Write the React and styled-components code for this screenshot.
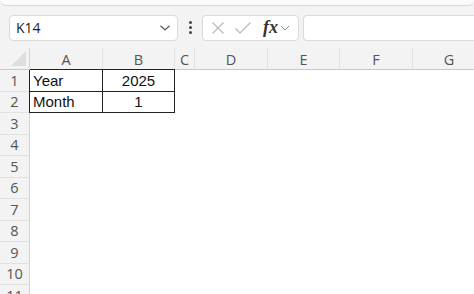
import React from "react";
import styled, { createGlobalStyle } from "styled-components";

const Global = createGlobalStyle`
  html, body { margin: 0; padding: 0; background: #f3f3f3; overflow: hidden; }
  body { width: 474px; height: 294px; font-family: "Open Sans", "Liberation Sans", sans-serif; }
`;

const Page = styled.div`
  width: 474px;
  height: 294px;
  display: flex;
  flex-direction: column;
  background: #f3f3f3;
  overflow: hidden;
  & > * { flex-shrink: 0; }
`;

const RibbonEdge = styled.div`
  height: 5px;
  background: #fbfbfb;
  border-bottom: 1px solid #d8d8d8;
  border-radius: 0 0 6px 6px;
`;

const Toolbar = styled.div`
  height: 42px;
  display: flex;
  align-items: center;
  padding: 1px 0 0 9px;
  box-sizing: border-box;
`;

const Box = styled.div`
  height: 26px;
  box-sizing: border-box;
  background: #ffffff;
  border: 1px solid #dadada;
  border-right: ${p => p.$open ? "none" : "1px solid #dadada"};
  border-radius: ${p => p.$open ? "4px 0 0 4px" : "4px"};
  display: flex;
  align-items: center;
  width: ${p => p.$w || "auto"};
  flex: ${p => p.$grow ? "1" : "none"};
  margin-right: ${p => p.$mr || "0"};
`;

const NameText = styled.span`
  font-family: "Open Sans", "Liberation Sans", sans-serif;
  font-size: 14px;
  color: #222;
  padding-left: 6px;
  flex: 1;
`;

const Dots = styled.div`
  width: 24px;
  display: flex;
  flex-direction: column;
  align-items: center;
  gap: 2px;
  span { width: 3px; height: 3px; background: #444; border-radius: 50%; }
`;

const Fx = styled.span`
  font-family: "Liberation Serif", "DejaVu Serif", serif;
  font-style: italic;
  font-weight: bold;
  font-size: 18px;
  color: #333;
  margin-left: 11px;
  line-height: 1;
  margin-top: -2px;
`;

const Grid = styled.div`
  display: grid;
  grid-template-columns: 30px 73px 72px 20px 73px 72px 73px 73px;
  grid-template-rows: 22px repeat(11, 21.5px);
  background: #ffffff;
`;

const Corner = styled.div`
  background: #f3f3f3;
  border-right: 1px solid #d4d4d4;
  border-bottom: 1px solid #c8c8c8;
  position: relative;
  &::after {
    content: "";
    position: absolute;
    right: 3px;
    bottom: 3px;
    width: 0; height: 0;
    border-left: 15px solid transparent;
    border-bottom: 15px solid #dedede;
  }
`;

const ColHead = styled.div`
  background: #f3f3f3;
  border-bottom: 1px solid #c8c8c8;
  border-right: 1px solid #e2e2e2;
  display: flex;
  align-items: center;
  justify-content: center;
  font-size: 14.5px;
  color: #555;
  font-family: "Open Sans", sans-serif;
  padding-top: 1px;
`;

const RowHead = styled.div`
  background: #f3f3f3;
  border-right: 1px solid #d4d4d4;
  border-bottom: 1px solid #e2e2e2;
  display: flex;
  align-items: center;
  justify-content: center;
  font-size: 14.5px;
  color: #555;
  font-family: "Open Sans", sans-serif;
  box-sizing: border-box;
`;

const Cell = styled.div`
  box-sizing: border-box;
  background: #fff;
  display: flex;
  align-items: center;
  justify-content: ${p => p.$center ? "center" : "flex-start"};
  padding-left: ${p => p.$center ? "0" : "3px"};
  font-family: "Liberation Sans", Arial, sans-serif;
  font-size: 15px;
  color: #111;
  border-top: ${p => p.$bt ? "1px solid #222" : "none"};
  border-left: ${p => p.$bl ? "1px solid #222" : "none"};
  border-right: ${p => p.$br ? "1px solid #222" : "none"};
  border-bottom: ${p => p.$bb ? "1px solid #222" : "none"};
  margin-top: ${p => p.$bt ? "-1px" : "0"};
  margin-left: ${p => p.$bl ? "-1px" : "0"};
`;

const Chevron = ({ x }) => (
  <svg width="12" height="8" viewBox="0 0 12 8" style={{ marginRight: x }}>
    <path d="M1.5 1.8 L6 6 L10.5 1.8" fill="none" stroke="#555" strokeWidth="1.2" />
  </svg>
);

const cols = ["A", "B", "C", "D", "E", "F", "G"];
const data = {
  "1A": { v: "Year" },
  "1B": { v: "2025", c: true },
  "2A": { v: "Month" },
  "2B": { v: "1", c: true },
};

export default function App() {
  const rows = [];
  for (let r = 1; r <= 11; r++) {
    rows.push(<RowHead key={"r" + r}>{r}</RowHead>);
    cols.forEach((c) => {
      const d = data[r + c];
      const inTable = r <= 2 && (c === "A" || c === "B");
      rows.push(
        <Cell
          key={r + c}
          $center={d && d.c}
          $bt={inTable && r === 1}
          $bl={inTable && c === "A"}
          $br={inTable}
          $bb={inTable}
        >
          {d ? d.v : ""}
        </Cell>
      );
    });
  }
  return (
    <Page>
      <Global />
      <RibbonEdge />
      <Toolbar>
        <Box $w="169px">
          <NameText>K14</NameText>
          <Chevron x="6px" />
        </Box>
        <Dots><span /><span /><span /></Dots>
        <Box $w="97px" $mr="4px">
          <svg width="14" height="14" viewBox="0 0 14 14" style={{ marginLeft: 8 }}>
            <path d="M1.5 1.5 L12.5 12.5 M12.5 1.5 L1.5 12.5" stroke="#b9b9b9" strokeWidth="1.2" fill="none" />
          </svg>
          <svg width="18" height="14" viewBox="0 0 18 14" style={{ marginLeft: 9 }}>
            <path d="M1.5 7.5 L6 12 L16.5 1.5" stroke="#b9b9b9" strokeWidth="1.2" fill="none" />
          </svg>
          <Fx>fx</Fx>
          <svg width="10" height="8" viewBox="0 0 10 8" style={{ marginLeft: 2 }}>
            <path d="M1 2 L5 6 L9 2" fill="none" stroke="#888" strokeWidth="1" />
          </svg>
        </Box>
        <Box $grow $open />
      </Toolbar>
      <Grid>
        <Corner />
        {cols.map((c) => <ColHead key={c}>{c}</ColHead>)}
        {rows}
      </Grid>
    </Page>
  );
}
